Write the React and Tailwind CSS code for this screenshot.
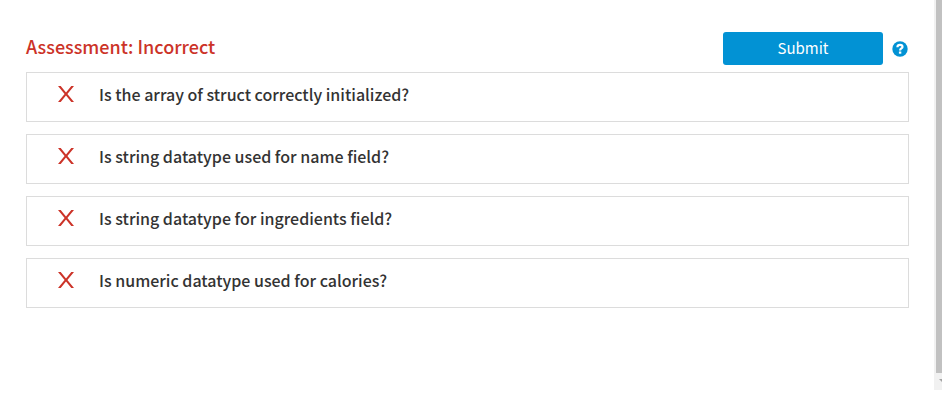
import React from 'react';

const checks = [
  { id: 1, question: 'Is the array of struct correctly initialized?' },
  { id: 2, question: 'Is string datatype used for name field?' },
  { id: 3, question: 'Is string datatype for ingredients field?' },
  { id: 4, question: 'Is numeric datatype used for calories?' },
];

const CrossIcon = () => (
  <svg viewBox="0 0 16 16" className="w-4 h-4 shrink-0" role="img" aria-label="Incorrect">
    <path
      d="M0 0H2.7L8 6.4L13.3 0H16L9.4 7.9L16 16H13.3L8 9.5L2.7 16H0L6.6 7.9Z"
      fill="#cc3328"
    />
  </svg>
);

const HelpIcon = () => (
  <svg viewBox="0 0 16 16" className="w-4 h-4" aria-hidden="true">
    <circle cx="8" cy="8" r="7.7" fill="#0292d4" />
    <path
      d="M5.4 6.2C5.5 4.6 6.5 3.9 8 3.9C9.6 3.9 10.5 4.7 10.5 5.9C10.5 7.5 8.1 7.5 8.1 9.4"
      fill="none"
      stroke="#fff"
      strokeWidth="2.2"
    />
    <rect x="6.9" y="10.5" width="2.4" height="2.2" fill="#fff" />
  </svg>
);

const CheckItem = ({ question }) => (
  <li className="flex items-start gap-[25px] h-[50px] pl-[31px] pt-[11px] border border-[#dcdcdc]">
    <span className="flex items-center h-5">
      <CrossIcon />
    </span>
    <span className="text-base leading-5 font-medium text-[#333333]">{question}</span>
  </li>
);

const Scrollbar = () => (
  <div className="flex flex-col w-2 shrink-0 pl-0.5 bg-[#f1f1f1]" aria-hidden="true">
    <div className="flex-1 bg-[#c1c1c1]" />
    <div className="flex justify-end h-[17px] pt-1.5">
      <svg viewBox="0 0 3 3" className="w-[3px] h-[3px]">
        <path d="M0 0H3V3Z" fill="#a3a3a3" />
      </svg>
    </div>
  </div>
);

const App = () => (
  <div className="flex bg-white font-['Noto_Sans_CJK_JP','Noto_Sans',sans-serif]">
    <main className="flex-1 min-w-0 pt-8 pl-[26px] pr-[25px] pb-[82px]">
      <div className="flex items-start justify-between mb-[7px]">
        <h1 className="pt-1 text-lg leading-5 font-medium text-[#cc3328]">
          Assessment: Incorrect
        </h1>
        <div className="flex items-center gap-[9px] pr-px">
          <button
            type="button"
            className="w-40 h-[33px] pb-0.5 rounded-[3px] bg-[#0292d4] text-[15px] leading-5 text-white"
          >
            Submit
          </button>
          <button type="button" aria-label="Help">
            <HelpIcon />
          </button>
        </div>
      </div>
      <ul className="flex flex-col gap-3">
        {checks.map((check) => (
          <CheckItem key={check.id} question={check.question} />
        ))}
      </ul>
    </main>
    <Scrollbar />
  </div>
);

export default App;
